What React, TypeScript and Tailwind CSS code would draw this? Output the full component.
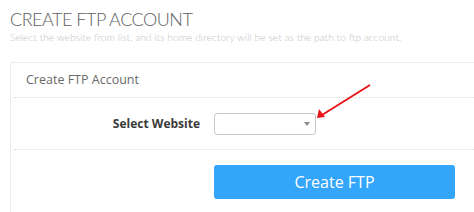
export default function App() {
  return (
    <div className="w-[474px] h-[212px] overflow-hidden bg-white relative" style={{ fontFamily: '"Open Sans", sans-serif' }}>
      <div className="pl-[10px] pt-[10px]">
        <h1 className="text-[18px] leading-[18px] font-light text-[#5e5e5e] tracking-[-0.5px]" style={{ fontFamily: 'Lato, sans-serif' }}>
          CREATE FTP ACCOUNT
        </h1>
        <p className="mt-[3px] text-[10.3px] leading-[12px] font-light text-[#c4c4c4]" style={{ fontFamily: 'Lato, sans-serif' }}>
          Select the website from list, and its home directory will be set as the path to ftp account.
        </p>
      </div>

      <div className="ml-[10px] mt-[19px] w-[480px] h-[200px] border border-[#ececec] rounded-[2px]">
        <div className="pl-[15px] pt-[9px] h-[34px] text-[12.5px] leading-[16px] text-[#6a6a6a]">
          Create FTP Account
        </div>
        <div className="mx-[3px] border-t border-dotted border-[#d8d8d8]" />
        <div className="h-[51px] flex items-center">
          <label className="w-[189px] text-right text-[12px] font-bold text-[#3a3a3a]">Select Website</label>
          <div className="ml-[14px] w-[102px] h-[22px] border border-[#c8c8c8] rounded-[3px] flex items-center justify-end pr-[5px]">
            <svg width="6" height="4" viewBox="0 0 6 4">
              <path d="M0 0 L6 0 L3 4 Z" fill="#8a8a8a" />
            </svg>
          </div>
        </div>
        <div className="mx-[3px] border-t border-dotted border-[#d8d8d8]" />
        <div className="pt-[15px] pl-[203px]">
          <button className="w-[241px] h-[34px] bg-[#33a5fb] rounded-[3px] text-white text-[16px]">
            Create FTP
          </button>
        </div>
      </div>

      <svg className="absolute left-0 top-0 pointer-events-none" width="474" height="212">
        <line x1="370" y1="85" x2="322" y2="115" stroke="#e8141a" strokeWidth="2" />
        <path d="M317 118 L319 109 L325 117 Z" fill="#e8141a" />
      </svg>
    </div>
  );
}
